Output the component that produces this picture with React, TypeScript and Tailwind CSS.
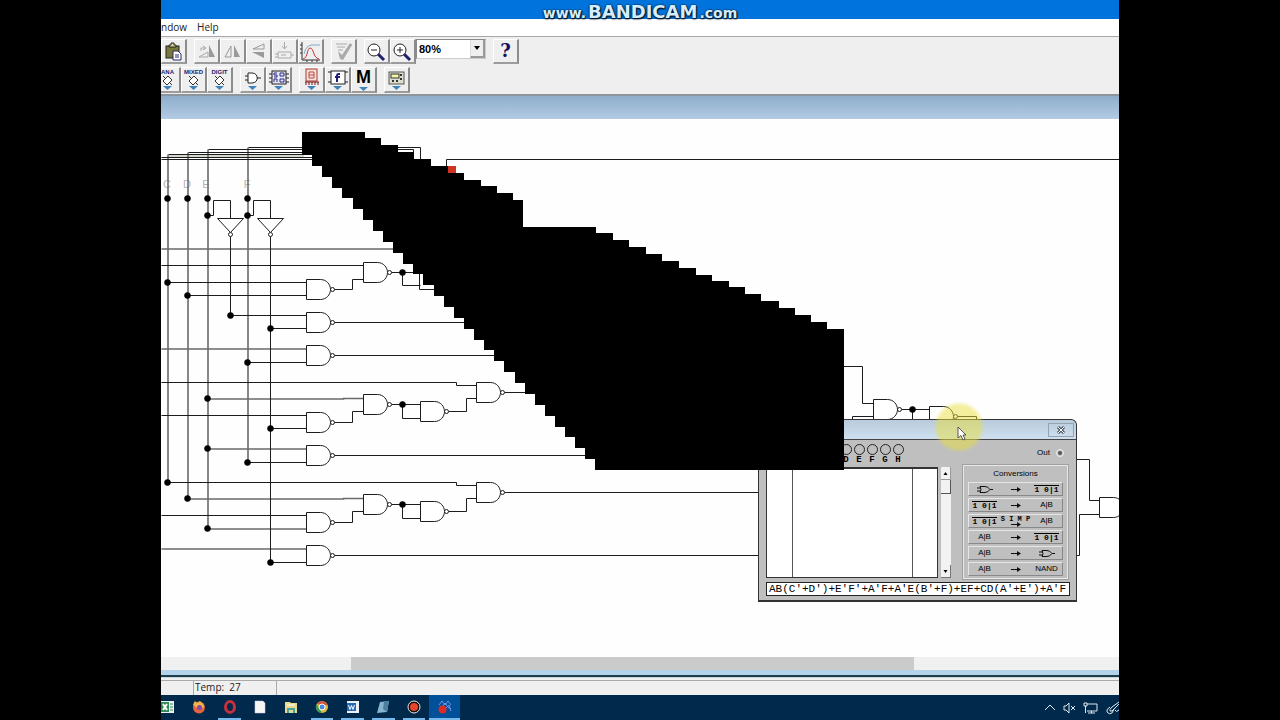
import type { ReactNode } from 'react'

type Point = [number, number]

const WIRES = [
  // input rails
  'M248 147H420V160', 'M208 149H413V160', 'M302 152H188', 'M302 154H168',
  'M161 157H320', 'M161 159H320',
  'M446 170V159H1119',
  // inverters
  'M208 215H213V200H230V218', 'M248 215H253V200H270V218', 'M230 236V315H306', 'M270 236V562H306',
  // left column inputs
  'M161 265H363', 'M168 282H306', 'M188 295H306', 'M270 328H306', 'M248 362H306',
  'M161 382H456V385H476', 'M161 415H306', 'M270 428H306', 'M248 462H306',
  'M168 482H456V485H476', 'M161 515H306',
  // gate outputs
  'M334 289H352V279H363', 'M391 272H420', 'M402 272V285H420', 'M419 270V289H440',
  'M334 322H480', 'M334 355H500',
  'M334 422H352V411H363', 'M391 404H420', 'M402 404V418H420', 'M448 411H466V398H476', 'M504 392H540',
  'M334 455H600',
  'M334 522H352V511H363', 'M391 504H420', 'M402 504V518H420', 'M448 511H466V498H476', 'M504 492H760',
  'M334 555H760',
  // right side
  'M840 366H862V403H873', 'M852 422V416H873', 'M901 409H929', 'M912 409V422', 'M957 416H976V422',
  'M1070 459H1089V500H1099', 'M1070 555H1079V514H1099',
]

const GRAY_WIRES = [
  'M167.5 154V482', 'M187.5 152V498', 'M207.5 149V528', 'M247.5 147V462',
  'M161 248.5H400', 'M161 348.5H306', 'M208 398.5H343V398H363', 'M208 448.5H306',
  'M188 498.5H343V498H363', 'M208 528.5H306', 'M161 548.5H306',
]

const GATES: Point[] = [
  [306, 289], [306, 322], [306, 355], [306, 422], [306, 455], [306, 522], [306, 555],
  [363, 272], [363, 404], [363, 504], [420, 411], [420, 511], [476, 392], [476, 492],
  [873, 409], [929, 416], [1099, 507],
]

const DOTS: Point[] = [
  [167, 198], [187, 198], [207, 198], [247, 198], [207, 215], [247, 215],
  [167, 282], [187, 295], [230, 315], [270, 328], [247, 362], [402, 272],
  [207, 398], [402, 404], [270, 428], [207, 448], [247, 462], [167, 482],
  [187, 498], [402, 504], [207, 528], [270, 562], [912, 409],
]

// upper staircase of the dark shape
const TOP_EDGE: Point[] = [
  [302, 132], [365, 138], [381, 145], [398, 152], [414, 159], [431, 166], [448, 173],
  [464, 180], [481, 186], [497, 193], [513, 200], [523, 227], [596, 233], [613, 240],
  [629, 247], [646, 254], [662, 261], [679, 268], [696, 275], [712, 281], [729, 287],
  [745, 294], [761, 301], [779, 308], [795, 315], [811, 322], [827, 329], [844, 470],
]

function shadowPath() {
  let d = 'M302 132'
  TOP_EDGE.slice(1).forEach(([x, y]) => {
    d += `H${x}V${y}`
  })
  for (let i = 29; i > 0; i--) {
    d += `H${Math.round(302 + i * 10.12)}V${Math.round(155 + (i - 1) * 10.86)}`
  }
  return d + 'H302Z'
}

function Circuit() {
  return (
    <svg className="absolute left-0 top-0" width="958" height="538" viewBox="161 119 958 538" aria-hidden="true">
      <g fontFamily="Liberation Sans" fontSize="11" fill="#b5b5b5" textAnchor="middle">
        <text x="167" y="188">C</text>
        <text x="187" y="188">D</text>
        <text x="206" y="188">E</text>
        <text x="247" y="188">F</text>
      </g>
      <rect x="168" y="155" width="136" height="2" fill="#d4d9d0" />
      <g transform="translate(.5 .5)" fill="none" stroke="#1c1c1c">
        <path d={GRAY_WIRES.join('')} stroke="#6a6a6a" strokeWidth="1.6" />
        <path d={WIRES.join('')} />
        {[230, 270].map((x) => (
          <g key={x} fill="#fff">
            <path d={`M${x - 13} 218H${x + 13}L${x} 232Z`} />
            <circle cx={x} cy="234" r="2" />
          </g>
        ))}
        {GATES.map(([x, y]) => (
          <g key={`${x}-${y}`} fill="#fff">
            <path d={`M${x} ${y - 10}H${x + 14}C${x + 20} ${y - 10} ${x + 24} ${y - 5} ${x + 24} ${y}S${x + 20} ${y + 10} ${x + 14} ${y + 10}H${x}Z`} />
            <circle cx={x + 26} cy={y} r="2" />
          </g>
        ))}
        {DOTS.map(([x, y]) => (
          <circle key={`${x}-${y}`} cx={x} cy={y} r="3" fill="#000" stroke="#000" strokeWidth=".6" />
        ))}
      </g>
    </svg>
  )
}

function ToolButton({ label, children, tall }: { label: string; children: ReactNode; tall?: boolean }) {
  return (
    <button
      aria-label={label}
      className="w-[26px] shrink-0 border-r-2 border-b-2 border-t border-l border-r-[#8c8c8c] border-b-[#9c9c9c] border-t-white border-l-white bg-[#efefef]"
    >
      <svg width="23" height={tall ? 23 : 22} viewBox={tall ? '0 0 23 23' : '0 0 23 22'} className="block">
        {children}
      </svg>
    </button>
  )
}

const Drop = () => <path d="M7 18H16L11.5 22Z" fill="#3f83bd" />

const Chip = ({ name }: { name: string }) => (
  <>
    <text x="11.5" y="6" textAnchor="middle" fontFamily="Liberation Sans" fontWeight="bold" fontSize="6" fill="#1b1b6e">{name}</text>
    <path d="M12 8L16 12L11 17L7 13ZM9 10L7 8M14 15L16 17" fill="#fff" stroke="#333" />
    <Drop />
  </>
)

function Toolbar() {
  return (
    <div className="h-[58px] bg-[#efefef] border-t border-[#a8a8a8] pt-0.5">
      <div className="flex gap-[7px] h-[25px] overflow-hidden">
        <ToolButton label="Paste">
          <rect x="4" y="6" width="13" height="12" fill="#77783a" stroke="#222" />
          <path d="M7 7V5H9V3H12V5H14V7Z" fill="#d8d890" stroke="#222" />
          <path d="M11 11H16L19 14V20H11Z" fill="#fff" stroke="#29296e" />
          <path d="M13 15H17M13 17H17" stroke="#29296e" />
        </ToolButton>
        <div className="flex">
          <ToolButton label="Rotate">
            <path d="M4 17H13V12ZM6 11V8H10M8 6L11 8L8 10" fill="none" stroke="#aaa" />
            <path d="M14 5V17H20Z" fill="#9a9a9a" />
          </ToolButton>
          <ToolButton label="Flip horizontal">
            <path d="M10 6V17H4Z" fill="none" stroke="#999" />
            <path d="M13 5V17H19Z" fill="#9a9a9a" />
          </ToolButton>
          <ToolButton label="Flip vertical">
            <path d="M17 4V9H6Z" fill="none" stroke="#999" />
            <path d="M5 12H17V18Z" fill="#9a9a9a" />
          </ToolButton>
          <ToolButton label="Edit component">
            <path d="M11.500 2V8M9 6L11.500 9L14 6M5 12H18V18H5ZM2 14H5M2 17H5M18 15H21M8 15H13" fill="none" stroke="#aaa" />
          </ToolButton>
          <ToolButton label="Run analysis">
            <path d="M3 2V20H21M1 5H3M1 9H3M1 13H3M8 20V22M13 20V22M18 20V22" fill="none" stroke="#333" />
            <path d="M5 14Q7 5 13 5H21" fill="none" stroke="#7ea9c9" />
            <path d="M4 19C9 18 8 8 11 8C15 8 14 18 20 19" fill="none" stroke="#c83232" />
          </ToolButton>
        </div>
        <ToolButton label="Check">
          <path d="M4 4H15M5 7H13M6 10H11M7 15L10 18L20 4" fill="none" stroke="#aaa" />
          <path d="M6 11L10 15L18 3L20 5L11 20L8 19Z" fill="#aaa" />
        </ToolButton>
        <div className="flex">
          <ToolButton label="Zoom out">
            <path d="M13 14L19 20" stroke="#20206e" strokeWidth="3" />
            <circle cx="9" cy="10" r="6" fill="#fff" stroke="#222" />
            <path d="M6 10H12" stroke="#222" />
          </ToolButton>
          <ToolButton label="Zoom in">
            <path d="M13 14L19 20" stroke="#20206e" strokeWidth="3" />
            <circle cx="9" cy="10" r="6" fill="#fff" stroke="#222" />
            <path d="M6 10H12M9 7V13" stroke="#222" />
          </ToolButton>
          <div className="relative h-5 w-[70px]">
            <select
              aria-label="Zoom"
              className="block h-5 w-full appearance-none border border-[#8a8a8a] border-r-[#ccc] border-b-[#ccc] bg-white pl-0.5 font-['Liberation_Sans'] text-[11px] leading-4 font-bold text-black"
            >
              <option>80%</option>
            </select>
            <span className="pointer-events-none absolute right-px top-px flex h-[18px] w-[15px] items-center justify-center border-r-2 border-b-2 border-l border-[#999] border-l-[#ddd] bg-[#efefef]">
              <svg width="6" height="4" viewBox="0 0 6 4"><path d="M0 0H6L3 4Z" /></svg>
            </span>
          </div>
        </div>
        <button
          aria-label="Help topics"
          className="w-[26px] border-r-2 border-b-2 border-t border-l border-r-[#8c8c8c] border-b-[#9c9c9c] border-t-white border-l-white font-['DejaVu_Serif'] text-lg leading-5 font-bold text-[#10105e]"
        >
          ?
        </button>
      </div>
      <div className="mt-[3px] flex gap-[7px] h-[26px] overflow-hidden">
        <div className="-ml-1.5 flex">
          <ToolButton tall label="Analog components"><Chip name="ANA" /></ToolButton>
          <ToolButton tall label="Mixed components"><Chip name="MIXED" /></ToolButton>
          <ToolButton tall label="Digital components"><Chip name="DIGIT" /></ToolButton>
        </div>
        <div className="flex">
          <ToolButton tall label="Logic gates">
            <path d="M7 5H11C18 5 18 15 11 15H7ZM4 8H7M4 12H7M16 10H20" fill="#fff" stroke="#222" />
            <Drop />
          </ToolButton>
          <ToolButton tall label="Logic chips">
            <rect x="5" y="3" width="14" height="13" fill="#e6e6f2" stroke="#222" />
            <path d="M2 6H5M2 10H5M2 14H5M19 6H22M19 10H22M19 14H22" stroke="#222" />
            <path d="M10 5H7V7H10V9H7M7 14V11H10V14M13 5H17V8H13ZM13 11H17V14H13Z" fill="none" stroke="#29298a" />
            <Drop />
          </ToolButton>
        </div>
        <div className="flex">
          <ToolButton tall label="Displays">
            <rect x="6" y="1" width="11" height="12" fill="#f6e0dc" stroke="#a53a30" />
            <path d="M9 4H14V10H9ZM9 7H14" fill="none" stroke="#b84a40" />
            <path d="M5 14H19M6 14V17M9 14V17M12 14V17M15 14V17M18 14V17" stroke="#7a1d18" />
            <Drop />
          </ToolButton>
          <ToolButton tall label="Functions">
            <rect x="5" y="3" width="14" height="13" fill="#fff" stroke="#222" />
            <path d="M2 4H5M2 14H5M19 4H22M19 14H22" stroke="#222" />
            <path d="M14 6H12.500Q11 6 11 8V14M9 9H14" fill="none" stroke="#20207a" strokeWidth="2" />
            <Drop />
          </ToolButton>
          <button
            aria-label="Miscellaneous"
            className="flex w-[26px] flex-col items-center border-r-2 border-b-2 border-t border-l border-r-[#8c8c8c] border-b-[#9c9c9c] border-t-white border-l-white font-['Liberation_Sans'] text-lg leading-[19px] font-bold text-black"
          >
            M
            <svg width="9" height="4" viewBox="0 0 9 4"><path d="M0 0H9L4.500 4Z" fill="#3f83bd" /></svg>
          </button>
        </div>
        <ToolButton tall label="Instruments">
          <rect x="4" y="4" width="15" height="12" fill="#deded0" stroke="#555" />
          <rect x="6" y="6" width="8" height="4" fill="#f4f4a8" stroke="#333" />
          <path d="M16 6V8M16 10V12M7 13H9M11 13H13" stroke="#333" strokeWidth="2" />
          <Drop />
        </ToolButton>
      </div>
    </div>
  )
}

const Arrow = () => (
  <svg width="10" height="5" viewBox="0 0 10 5"><path d="M0 2H6V0L10 2.500L6 5V3H0Z" fill="#111" /></svg>
)
const Table = () => (
  <span className="block whitespace-nowrap border-t border-black font-['Liberation_Mono'] text-[8px] leading-[7px] font-bold">1 0|1</span>
)
const GateIcon = () => (
  <svg width="16" height="7" viewBox="0 0 16 7"><path d="M3 .5H8Q11 .5 13 3.500Q11 6.500 8 6.500H3Q5 3.500 3 .5ZM0 2H4M0 5H4M13 3.500H16" fill="none" stroke="#111" /></svg>
)
const Expr = () => <span>A|B</span>

const CONVERSIONS = [
  { name: 'Circuit to truth table', from: <GateIcon />, to: <Table /> },
  { name: 'Truth table to expression', from: <Table />, to: <Expr /> },
  { name: 'Simplify', from: <Table />, to: <Expr />, simp: true },
  { name: 'Expression to truth table', from: <Expr />, to: <Table /> },
  { name: 'Expression to circuit', from: <Expr />, to: <GateIcon /> },
  { name: 'Expression to NAND', from: <Expr />, to: <span>NAND</span> },
]

function LogicConverter() {
  return (
    <section
      aria-label="Logic converter"
      className="absolute left-[597px] top-[300px] w-[319px] rounded-t-md border border-[#333] border-b-2 bg-[#bfbfbf] font-['Liberation_Sans'] text-[8px] text-black"
    >
      <div className="flex h-5 items-center justify-end rounded-t-md border-b border-[#444] bg-linear-to-b from-[#b9cadb] to-[#cfe0f1]">
        <button aria-label="Close" className="mr-0.5 flex h-3.5 w-[26px] items-center justify-center border border-[#93a3b3]">
          <svg width="10" height="8" viewBox="0 0 10 8">
            <path d="M2 1L8 7M8 1L2 7" stroke="#4c5866" strokeWidth="3" />
            <path d="M2 1L8 7M8 1L2 7" stroke="#fff" />
          </svg>
        </button>
      </div>
      <div className="flex gap-3 pl-[7px] pr-2">
        <div className="w-[185px]">
          <div className="flex h-[27px] gap-px pl-[74px] pt-1">
            {['D', 'E', 'F', 'G', 'H'].map((pin) => (
              <button key={pin} className="flex w-3 flex-col items-center">
                <span className="h-[11px] w-[11px] rounded-full border border-[#222]" />
                <span className="font-['Liberation_Mono'] text-[9px] leading-[11px] font-bold">{pin}</span>
              </button>
            ))}
          </div>
          <div className="flex h-[111px] gap-[3px]">
            <div className="flex flex-1 border border-[#333] border-t-2 bg-white">
              <div className="w-[26px] border-r border-[#555]" />
              <div className="flex-1" />
              <div className="w-[25px] border-l border-[#555]" />
            </div>
            <div className="flex w-2.5 flex-col justify-between bg-[#f2f2f2]">
              <div>
                <button aria-label="Scroll up" className="flex h-[13px] w-2.5 items-center justify-center border-r border-b border-[#999]">
                  <svg width="5" height="3" viewBox="0 0 4 3"><path d="M0 3L2 0L4 3Z" /></svg>
                </button>
                <div className="h-3.5 border-r border-b border-[#555] bg-[#f2f2f2]" />
              </div>
              <button aria-label="Scroll down" className="flex h-[13px] w-2.5 items-center justify-center border-r border-b border-[#777]">
                <svg width="5" height="3" viewBox="0 0 4 3"><path d="M0 0H4L2 3Z" /></svg>
              </button>
            </div>
          </div>
        </div>
        <div className="flex-1">
          <div className="flex h-[25px] items-center justify-end gap-1.5 pr-1">
            <span>Out</span>
            <span className="flex h-2 w-2 items-center justify-center rounded-full border border-[#eee]">
              <span className="h-1 w-1 rounded-full bg-[#555]" />
            </span>
          </div>
          <div className="border border-[#e8e8e8] px-1 outline outline-[#a0a0a0]">
            <h2 className="h-4 text-center leading-[15px]">Conversions</h2>
            <div className="flex flex-col gap-0.5 pb-0.5">
              {CONVERSIONS.map((item) => (
                <button
                  key={item.name}
                  aria-label={item.name}
                  className="grid h-3.5 grid-cols-3 items-center justify-items-center border border-[#e6e6e6] border-r-[#888] border-b-[#888] leading-3"
                >
                  {item.from}
                  <span className="flex flex-col items-center">
                    {item.simp && <span className="whitespace-nowrap font-['Liberation_Mono'] text-[7px] leading-[6px] font-bold">S I M P</span>}
                    <Arrow />
                  </span>
                  {item.to}
                </button>
              ))}
            </div>
          </div>
        </div>
      </div>
      <input
        aria-label="Expression"
        readOnly
        value="AB(C'+D')+E'F'+A'F+A'E(B'+F)+EF+CD(A'+E')+A'F"
        className="mx-[7px] mt-[3px] mb-1 block h-3.5 w-[304px] border border-[#222] bg-white pl-0.5 font-['Liberation_Mono'] text-[11px] leading-3 text-black"
      />
    </section>
  )
}

const TASKS: { name: string; running?: boolean; active?: boolean; icon: ReactNode }[] = [
  { name: 'Excel', icon: <><rect x="1" y="2" width="13" height="12" fill="#e9f3ec" /><path d="M1 3H9V13H1Z" fill="#2f8a57" /><path d="M3 5L7 11M7 5L3 11" stroke="#fff" strokeWidth="2" /><path d="M10 5H13M10 8H13M10 11H13" stroke="#2f8a57" /></> },
  { name: 'Firefox', icon: <><circle cx="8" cy="8.500" r="6" fill="#e8643c" /><path d="M2 6Q3 3 4 2L6 4L9 2L11 4Q13 5 13 8Q9 12 5 8Z" fill="#f6b443" /><circle cx="8.500" cy="8.500" r="2.500" fill="#7a4bb5" /></> },
  { name: 'Opera', running: true, icon: <ellipse cx="8" cy="8" rx="4.500" ry="5.500" fill="none" stroke="#c9303e" strokeWidth="3" /> },
  { name: 'Document', icon: <path d="M3 2H11L13 4V14H3Z" fill="#f6f6f6" stroke="#ccd" strokeWidth=".5" /> },
  { name: 'File Explorer', icon: <><path d="M2 3H7L8 4H14V14H2Z" fill="#e9d98c" /><path d="M4 9H12V14H10V11H6V14H4Z" fill="#4aa39b" /><path d="M4 6H12" stroke="#fff" /></> },
  { name: 'Chrome', running: true, icon: <><circle cx="8" cy="8" r="6" fill="#e0b93b" /><path d="M3 5A6 6 0 0 1 13.500 6H8Z" fill="#d84b3c" /><path d="M2.500 5L8 14A6 6 0 0 1 2.500 5Z" fill="#3c9a56" /><circle cx="8" cy="8" r="3" fill="#4a8be0" stroke="#fff" /></> },
  { name: 'Word', running: true, icon: <><rect x="2" y="2" width="12" height="12" fill="#eaf1fa" /><rect x="2" y="4" width="9" height="8" fill="#2569b5" /><path d="M3.500 6L5 10.500L6.500 6.500L8 10.500L9.500 6" fill="none" stroke="#fff" /></> },
  { name: 'Notepad', running: true, icon: <><path d="M5 3L14 2L12 13L2 14Z" fill="#86b6cf" /><path d="M9 2.500L14 2L12 13L8 10Z" fill="#4c7f9c" /></> },
  { name: 'Recorder', running: true, icon: <><circle cx="8" cy="8" r="6" fill="#111" stroke="#e8e8e8" /><circle cx="8" cy="8" r="4" fill="#e8432c" /></> },
  { name: 'Circuit simulator', active: true, icon: <><path d="M2 6L5 2L8 6L11 2L14 6M5 8L8 4L11 8L14 10M8 10L12 6L14 12" fill="none" stroke="#6e93e8" /><circle cx="5.500" cy="10.500" r="4" fill="#dc2a24" /></> },
]

function Taskbar() {
  return (
    <footer className="flex h-[25px] justify-between bg-[#00294b]">
      <div className="-ml-2 flex w-[307px]">
        {TASKS.map((task) => (
          <button key={task.name} aria-label={task.name} className={`relative flex flex-1 justify-center pt-1 ${task.active ? 'bg-[#00509a]' : ''}`}>
            <svg width="16" height="16" viewBox="0 0 16 16">{task.icon}</svg>
            {(task.running || task.active) && (
              <span className={`absolute bottom-0 h-0.5 bg-[#76b9ed] ${task.active ? 'inset-x-0' : 'inset-x-1'}`} />
            )}
          </button>
        ))}
      </div>
      <div className="flex items-center gap-1.5">
        <button aria-label="Show hidden icons">
          <svg width="14" height="14" viewBox="0 0 14 14" fill="none" stroke="#dce8f2"><path d="M2 9L7 4L12 9" /></svg>
        </button>
        <button aria-label="Volume muted">
          <svg width="14" height="14" viewBox="0 0 14 14" fill="none" stroke="#dce8f2"><path d="M1 5H3L6 2V12L3 9H1ZM8 5L12 9M12 5L8 9" /></svg>
        </button>
        <button aria-label="Network">
          <svg width="16" height="14" viewBox="0 0 16 14" fill="none" stroke="#dce8f2"><path d="M4 3H14V10H4M5 12H12M8.500 10V12M1 2H4V5H1ZM2.500 5V12" /></svg>
        </button>
        <button aria-label="Pen">
          <svg width="14" height="14" viewBox="0 0 14 14" fill="none" stroke="#dce8f2"><path d="M14 1L7 6Q4 9 5 10Q7 11 9 8L14 3M5 6Q1 8 2 11Q4 14 7 12L9 8M10 9Q11 12 14 9" /></svg>
        </button>
      </div>
    </footer>
  )
}

export default function App() {
  return (
    <div className="min-h-screen bg-black px-[161px]">
      <div className="flex min-h-screen flex-col overflow-hidden bg-white">
        <header className="relative h-[19px] bg-[#0074dc]">
          <div className="absolute inset-x-0 top-0.5 z-10 flex items-baseline justify-center gap-0.5 font-['DejaVu_Sans'] text-sm leading-5 font-bold text-[#d3edff] [text-shadow:0_0_2px_#012,0_1px_2px_#012,1px_1px_1px_#023]">
            <span>www.</span>
            <span className="text-lg leading-5">BANDICAM</span>
            <span>.com</span>
          </div>
        </header>
        <nav className="flex h-[17px] gap-2.5 bg-white font-['Open_Sans'] text-[10px] leading-[17px] text-[#222]">
          <button>ndow</button>
          <button>Help</button>
        </nav>
        <Toolbar />
        <div className="h-[25px] border-t-2 border-[#8d959c] bg-linear-to-b from-[#8eaecb] to-[#b3cae4]" />
        <main className="relative min-h-[480px] flex-1 overflow-hidden bg-[#fefefe]">
          <Circuit />
          <LogicConverter />
          <svg className="pointer-events-none absolute left-0 top-0" width="958" height="538" viewBox="161 119 958 538" aria-hidden="true">
            <defs>
              <radialGradient id="halo">
                <stop offset=".8" stopColor="#e9df3c" stopOpacity=".5" />
                <stop offset="1" stopColor="#e9df3c" stopOpacity="0" />
              </radialGradient>
            </defs>
            <path d={shadowPath()} />
            <rect x="448" y="166" width="8" height="7" fill="#cf3322" />
            <circle cx="959" cy="427" r="26" fill="url(#halo)" />
            <path d="M958 427V438L961 435.500L963 440L965 439L963 435H966Z" fill="#fff" stroke="#333" strokeWidth=".8" />
          </svg>
        </main>
        <div className="flex h-[13px] bg-[#f0f0f0] pl-[190px] pr-[205px]">
          <div className="flex-1 bg-[#cbcbcb]" />
        </div>
        <div className="h-[7px] border-b-2 border-[#1d3c4c] bg-[#b2d3ea]" />
        <div className="flex h-[18px] border-t border-[#c4d4d8] bg-[#f0f0f0] pt-0.5 font-['Open_Sans'] text-[10px] leading-3 text-[#222]">
          <div className="w-8 border-t border-[#aaa]" />
          <div className="w-[84px] whitespace-pre border-t border-r border-l border-[#aaa] pl-px">Temp:  27</div>
          <div className="flex-1 border-t border-[#aaa]" />
        </div>
        <Taskbar />
      </div>
    </div>
  )
}
